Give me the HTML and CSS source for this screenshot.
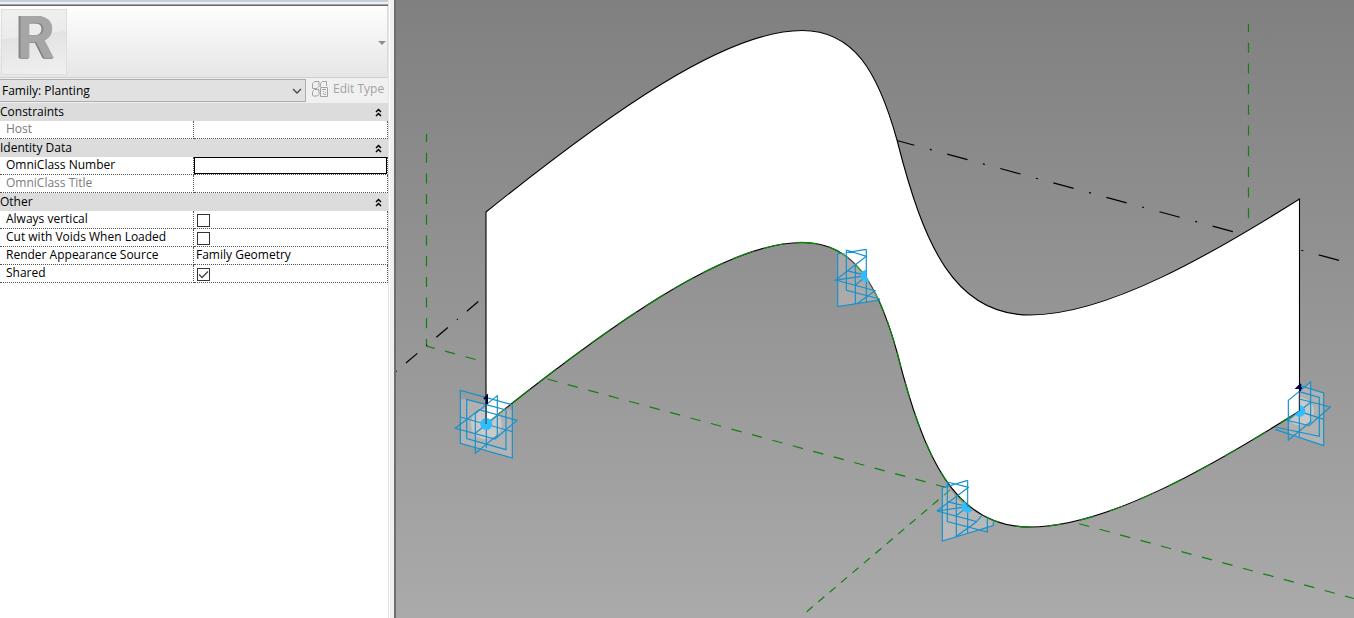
FILE: index.html
```html
<!DOCTYPE html>
<html lang="en">
<head>
    <meta charset="UTF-8">
    <meta name="viewport" content="width=device-width, initial-scale=1.0">
    <title>Properties</title>
    <link rel="stylesheet" href="styles.css">
</head>
<body>
    <div class="app">
        <aside class="panel">
            <div class="panel-top"></div>

            <div class="type-box">
                <div class="thumb"><span class="thumb-letter">R</span></div>
                <button class="type-arrow" type="button" aria-label="Change type">
                    <svg width="8" height="4" viewBox="0 0 8 4"><path d="M0 0h8L4 4z" fill="#909090"/></svg>
                </button>
            </div>

            <div class="filter">
                <div class="select-wrap">
                    <select class="family" aria-label="Family">
                        <option>Family: Planting</option>
                    </select>
                    <svg class="chevron" width="10" height="6" viewBox="0 0 10 6"><path d="M1 1l4 4 4-4" fill="none" stroke="#444" stroke-width="1.3"/></svg>
                </div>
                <button class="edit-type" type="button" disabled>
                    <svg width="17" height="17" viewBox="0 0 17 17" fill="none" stroke="#a3a3a3">
                        <path d="M.5 7.500v-5l2-2h4.500v5l-2 2zM8.500 5.500v-3l2-2h4v4.500M.5 14.500v-4l2-2h4.500v5l-1.500 1.500h-4.500z"/>
                        <path d="M8.500 6.500h7v9h-7zM10 8.500h4M11 10.500h1M13 11.500h1M11 12.500h1M12 13.500h2"/>
                    </svg>
                    <span>Edit Type</span>
                </button>
            </div>

            <table class="props">
                <tbody>
                    <tr class="group">
                        <th colspan="2"><div class="group-in"><span>Constraints</span><button class="fold" type="button" aria-label="Collapse Constraints"><svg width="7" height="9" viewBox="0 0 7 9"><path d="M1 4l2.500-2.500L6 4M1 8l2.500-2.500L6 8"/></svg></button></div></th>
                    </tr>
                    <tr class="off">
                        <td>Host</td>
                        <td></td>
                    </tr>
                </tbody>
                <tbody>
                    <tr class="group">
                        <th colspan="2"><div class="group-in"><span>Identity Data</span><button class="fold" type="button" aria-label="Collapse Identity Data"><svg width="7" height="9" viewBox="0 0 7 9"><path d="M1 4l2.500-2.500L6 4M1 8l2.500-2.500L6 8"/></svg></button></div></th>
                    </tr>
                    <tr>
                        <td><label for="omni">OmniClass Number</label></td>
                        <td class="edit"><input class="text" id="omni" type="text"></td>
                    </tr>
                    <tr class="off">
                        <td>OmniClass Title</td>
                        <td></td>
                    </tr>
                </tbody>
                <tbody>
                    <tr class="group">
                        <th colspan="2"><div class="group-in"><span>Other</span><button class="fold" type="button" aria-label="Collapse Other"><svg width="7" height="9" viewBox="0 0 7 9"><path d="M1 4l2.500-2.500L6 4M1 8l2.500-2.500L6 8"/></svg></button></div></th>
                    </tr>
                    <tr>
                        <td><label for="vertical">Always vertical</label></td>
                        <td class="tick"><input class="check" id="vertical" type="checkbox"></td>
                    </tr>
                    <tr>
                        <td><label for="voids">Cut with Voids When Loaded</label></td>
                        <td class="tick"><input class="check" id="voids" type="checkbox"></td>
                    </tr>
                    <tr>
                        <td>Render Appearance Source</td>
                        <td>Family Geometry</td>
                    </tr>
                    <tr>
                        <td><label for="shared">Shared</label></td>
                        <td class="tick"><input class="check" id="shared" type="checkbox" checked></td>
                    </tr>
                </tbody>
            </table>
        </aside>

        <div class="splitter"></div>

        <main class="view">
            <svg class="scene" viewBox="396 0 958 618" preserveAspectRatio="xMidYMid slice">
                <!-- reference planes -->
                <g class="plane">
                    <path class="up" d="M426.500 134V346"/>
                    <path class="up" d="M1248.500 24V220"/>
                    <path class="across" d="M426 346L1354 598.500"/>
                    <path class="front" d="M950 490L804 614"/>
                </g>
                <path class="level" d="M897 140.500L1354 264.500"/>
                <path class="level-left" d="M396 371.500L486 295"/>

                <!-- surface -->
                <path class="face" d="M486 212C608 114 725 30.500 802 30.500C854 30.500 878 72 897 140C924 247 955 315 1030 315C1107 315 1212 254 1299.500 199V411C1212 466 1107 527 1030 527C955 527 924 459 897 352C878 284 854 242.500 802 242.500C725 242.500 608 326 486 424z"/>
                <path class="edge-dash" d="M486 424C608 326 725 242.500 802 242.500C854 242.500 878 284 897 352"/>
                <path class="edge-dash short" d="M897 352C924 459 955 527 1030 527C1107 527 1212 466 1299.500 411"/>

                <!-- points with their work planes -->
                <g class="point" transform="translate(440 370) scale(.3333)">
                    <path class="tint" d="M80 88L139 105 172 77V108L217 120V264L106 234 61 220V88z"/>
                    <circle class="halo" cx="139" cy="162" r="46"/>
                    <path d="M61 61L217 104V264L61 220zM80 88L198 120V239L80 206z"/>
                    <path d="M106 131L172 77V196L106 250zM46 175L118 119 231 151 165 207z"/>
                    <path d="M61 141L217 185M139 105V235M106 190L172 137"/>
                    <circle class="dot" cx="139" cy="162" r="18"/>
                </g>
                <g class="point" transform="translate(820 235) scale(.3333)">
                    <path class="tint" d="M53 57L79 53 106 80 139 122 180 192 53 215z"/>
                    <path d="M139 43L53 57V215L180 195M139 43V200M79 45V166L180 192M79 45L139 64"/>
                    <path d="M139 64L47 135 139 122M47 135L165 167 110 207M106 88V207M106 150L139 124M79 107L127 118"/>
                    <path class="dot" d="M139 104A18 18 0 1 0 148 138L139 122z"/>
                </g>
                <g class="point" transform="translate(925 465) scale(.3333)">
                    <path class="tint" d="M52 69L67 64 94 98 128 130 205 170V182L52 228z"/>
                    <path d="M128 46L52 69V228L205 182V170M128 46V205M67 51V170L187 201V160M67 51L131 67"/>
                    <path d="M131 67L36 138 128 125M36 138L155 170 170 152M94 90V214L155 170M94 152L128 125M67 110L115 122"/>
                    <path class="dot" d="M120 109A18 18 0 1 0 143 135L127 126z"/>
                </g>
                <g class="point" transform="translate(1260 360) scale(.3333)">
                    <path class="tint" d="M118 95L152 66V87L191 99V257L85 225V180L118 154z"/>
                    <path class="halo" d="M118 154V112A42 42 0 1 1 85 178z"/>
                    <path d="M118 76L191 99V257L45 208M118 95L178 112V229L45 201"/>
                    <path d="M85 121L152 66V186L85 240zM118 117L211 141 147 197 78 180"/>
                    <path d="M118 154L191 178M118 154L152 127M118 95V230M118 154L85 180"/>
                    <path class="dot" d="M118 136A17 17 0 1 1 105 163L118 154z"/>
                </g>
                <path class="end-line" d="M486 397V424M1299.500 384V411"/>
                <path class="end-mark" d="M484 399L487 396V404M1301 384L1297 388H1302M1300 384V391"/>
            </svg>
        </main>
    </div>
</body>
</html>
```
FILE: styles.css
```css
*{
    box-sizing: border-box;
    margin: 0;
    padding: 0;
}

body{
    font-family: "Open Sans", "Noto Sans", sans-serif;
    font-size: 12px;
    line-height: 16px;
    color: #000;
    background-color: #fff;
}

button, input, select{
    font: inherit;
    color: inherit;
}

button{
    border: none;
    background: none;
}

.app{
    display: flex;
    min-height: 100vh;
}

/* properties panel */
.panel{
    flex: none;
    width: 388px;
    background-color: #fff;
}

.panel-top{
    height: 6px;
    background: linear-gradient(#bfcfdd 2px, #f0f0f0 2px, #f0f0f0 4px, #a0a0a0 4px, #a0a0a0 5px, #696969 5px);
}

.type-box{
    display: flex;
    align-items: center;
    justify-content: space-between;
    height: 72px;
    padding: 1px 1px 0;
    border-right: 1px solid #dcdcdc;
    border-bottom: 1px solid #d0d0d0;
    background: linear-gradient(#fefefe, #e6e6e6);
}

.thumb{
    display: grid;
    place-items: center;
    width: 66px;
    height: 66px;
    padding: 0 0 10px 4px;
    border: 1px solid #dedede;
    background: linear-gradient(172deg, #f0f0f0, #ebebeb 40%, #e3e3e3 41%, #f0f0f0);
}

.thumb-letter{
    font: bold 60px/56px Roboto, "Liberation Sans", sans-serif;
    color: #a6a6a6;
    text-shadow: -1px 0 #868686, -2px 0 #868686, -1px 1px #959595;
}

.type-arrow{
    display: flex;
    padding: 4px 0 2px;
}

.filter{
    display: flex;
    gap: 6px;
    height: 25px;
    padding-top: 1px;
    background-color: #f0f0f0;
}

.select-wrap{
    position: relative;
    flex: none;
    width: 306px;
    height: 23px;
}

.family{
    width: 100%;
    height: 100%;
    padding-left: 2px;
    appearance: none;
    border: 1px solid #adadad;
    border-left: none;
    border-radius: 0;
    background-color: #e1e1e1;
}

.chevron{
    position: absolute;
    top: 9px;
    right: 4px;
    pointer-events: none;
}

.edit-type{
    display: flex;
    align-items: center;
    gap: 4px;
    height: 20px;
    white-space: nowrap;
    color: #a3a3a3;
}

.props{
    width: 100%;
    table-layout: fixed;
    border-collapse: separate;
    border-spacing: 0;
}

.props td{
    height: 18px;
    padding: 0 2px;
    line-height: 15px;
    vertical-align: top;
    border-right: 1px dotted #555;
    border-bottom: 1px dotted #555;
}

.props td:first-child{
    padding-left: 6px;
}

.props .off{
    color: #7a7a7a;
}

.group th{
    height: 18px;
    font-weight: normal;
    text-align: left;
    background-color: #dcdcdc;
}

.group-in{
    display: flex;
    align-items: center;
    justify-content: space-between;
    height: 18px;
    padding-right: 6px;
}

.fold{
    display: flex;
}

.fold path{
    fill: none;
    stroke: #000;
    stroke-width: 1.5;
}

.props .edit{
    padding: 0;
}

.text{
    display: block;
    width: 100%;
    height: 17px;
    padding: 0 2px;
    border: 1px solid #000;
    outline: none;
}

.props .tick{
    padding: 3px 3px 0;
}

.check{
    display: block;
    width: 13px;
    height: 13px;
    appearance: none;
    border: 1px solid #333;
    background-color: #fff;
}

.check:checked{
    background-image: url("data:image/svg+xml,%3Csvg xmlns='http://www.w3.org/2000/svg' viewBox='0 0 11 11'%3E%3Cpath d='M1 5.500l3 3 6-6' fill='none' stroke='%23444' stroke-width='1.300'/%3E%3C/svg%3E");
}

.splitter{
    flex: none;
    width: 8px;
    border-left: 1px solid #e3e3e3;
    border-right: 2px solid #6e6e6e;
    background: linear-gradient(90deg, #fff 1px, #f0f0f0 1px);
}

/* 3D view */
.view{
    position: relative;
    flex: 1;
    min-width: 0;
    overflow: hidden;
    background: linear-gradient(#808080, #aaa);
}

.scene{
    position: absolute;
    width: 100%;
    height: 100%;
}

.scene path{
    fill: none;
}

.plane{
    stroke: #118011;
    stroke-width: 1.2;
}

.up{
    stroke-dasharray: 10 10.7;
    stroke-dashoffset: 2;
}

.across{
    stroke-dasharray: 10.500 10.700;
    stroke-dashoffset: 1.5;
}

.front{
    stroke-dasharray: 8 7;
}

.level{
    stroke: #000;
    stroke-width: 1.2;
    stroke-dasharray: 21 16 2 16;
    stroke-dashoffset: 3;
}

.level-left{
    stroke: #000;
    stroke-width: 1.2;
    stroke-dasharray: 1 12 15 12;
}

.scene .face{
    fill: #fff;
    stroke: #000;
    stroke-width: 1.1;
}

.edge-dash{
    stroke: #118011;
    stroke-width: 1.3;
    stroke-dasharray: 23 10;
}

.short{
    stroke-dasharray: 15 17;
}

.point path{
    stroke: #1591cb;
    stroke-width: 3.5;
}

.scene .point .tint{
    fill: #fff;
    fill-opacity: .22;
    stroke: none;
}

.scene .halo{
    fill: #fff;
    fill-opacity: .3;
    stroke: none;
}

.scene .dot{
    fill: #30bdff;
    stroke: none;
}

.end-line{
    stroke: #333;
}

.end-mark{
    stroke: #00003c;
    stroke-width: 2;
}
```
